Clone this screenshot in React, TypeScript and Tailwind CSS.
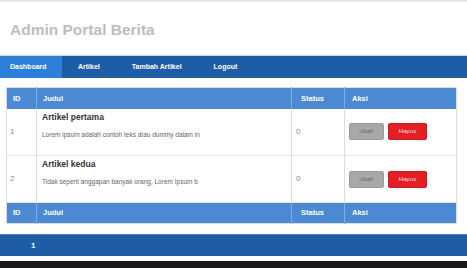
// Admin Portal Berita — halaman dashboard dengan daftar artikel.

const MENU = ['Dashboard', 'Artikel', 'Tambah Artikel', 'Logout']

const ARTIKEL = [
  { id: 1, judul: 'Artikel pertama', isi: 'Lorem ipsum adalah contoh teks atau dummy dalam in', status: 0 },
  { id: 2, judul: 'Artikel kedua', isi: 'Tidak seperti anggapan banyak orang, Lorem Ipsum b', status: 0 },
]

function KepalaTabel() {
  return (
    <tr className="h-[21px] bg-[#4b8ad2] text-white text-[7.5px] font-bold">
      <th className="w-[30px] border-r border-[#80abe0] pl-[6px] text-left font-bold">ID</th>
      <th className="border-r border-[#80abe0] pl-[6px] text-left font-bold">Judul</th>
      <th className="w-[53px] border-r border-[#80abe0] pl-[9px] text-left font-bold">Status</th>
      <th className="w-[112px] pl-[7px] text-left font-bold">Aksi</th>
    </tr>
  )
}

export default function App() {
  return (
    <div className="w-[467px] h-[268px] bg-white overflow-hidden flex flex-col" style={{ fontFamily: '"Liberation Sans", Arial, sans-serif' }}>
      <div className="h-[2px] bg-[#e6e6e6]" />

      {/* Judul */}
      <h1 className="h-[53px] pl-[10px] pt-[18px] text-[15.5px] leading-[20px] font-bold text-[#bdbdbd]">
        Admin Portal Berita
      </h1>

      {/* Menu */}
      <nav className="h-[23px] flex border-t border-[#c5d3e6] bg-[#1f5ca6]">
        {MENU.map((m, i) => (
          <a
            key={m}
            className={
              'flex items-center text-[7px] font-bold text-white ' +
              (i === 0 ? 'bg-[#2e7fd9] w-[62px] pl-[10px]' : 'px-[16px]')
            }
          >
            {m}
          </a>
        ))}
      </nav>

      {/* Tabel artikel */}
      <div className="pl-[6px] pt-[9px] w-[457px]">
        <table className="w-full border-collapse border border-[#dddddd] table-fixed">
          <thead>
            <KepalaTabel />
          </thead>
          <tbody>
            {ARTIKEL.map(a => (
              <tr key={a.id} className="h-[47px] border-b border-[#e6e6e6]">
                <td className="border-r border-[#dddddd] pl-[3px] text-[8px] text-[#8a8a8a] align-middle">{a.id}</td>
                <td className="border-r border-[#dddddd] pl-[5px] pt-[2px] align-top">
                  <p className="text-[8.5px] leading-[12px] font-bold text-[#333333]">{a.judul}</p>
                  <p className="mt-[7px] text-[6.5px] leading-[10px] text-[#666666] whitespace-nowrap overflow-hidden">{a.isi}</p>
                </td>
                <td className="border-r border-[#dddddd] pl-[4px] text-[8px] text-[#8a8a8a] align-middle">{a.status}</td>
                <td className="pl-[4px] align-middle">
                  <div className="flex gap-[4px]">
                    <button className="w-[35px] h-[17px] rounded-[2px] bg-[#a8a8a8] border border-[#9c9c9c] text-[6px] text-[#666666]">Ubah</button>
                    <button className="w-[39px] h-[17px] rounded-[2px] bg-[#e21f26] border border-[#d01a20] text-[6px] text-[#ffd8d8]">Hapus</button>
                  </div>
                </td>
              </tr>
            ))}
          </tbody>
          <tfoot>
            <KepalaTabel />
          </tfoot>
        </table>
      </div>

      {/* Paginasi */}
      <div className="mt-[10px] h-[22px] flex items-center border-t border-[#4d82c4] bg-[#1f5ca6]">
        <span className="pl-[7px] text-[6px] text-[#2f4f7a]">•</span>
        <span className="pl-[22px] text-[8px] font-bold text-white">1</span>
      </div>
      <div className="h-[5px] bg-white" />
      <div className="flex-1 bg-[#1a1a1a]" />
    </div>
  )
}
